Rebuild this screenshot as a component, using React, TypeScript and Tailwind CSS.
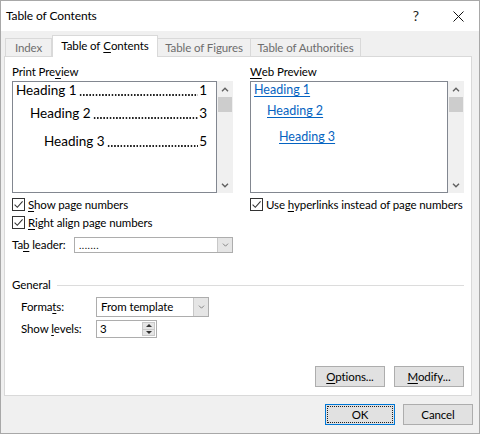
import type { ReactNode } from "react"

function CheckMark() {
  return (
    <svg viewBox="0 0 11 11" className="size-[11px]">
      <path d="M1.6 5.6 L4.3 8.3 L9.6 2.4" fill="none" stroke="#333" strokeWidth="1.1" />
    </svg>
  )
}

function Check({ children }: { children: ReactNode }) {
  return (
    <div className="flex h-[17px] items-center gap-[3px] whitespace-nowrap">
      <span className="flex size-[13px] shrink-0 items-center justify-center border border-[#333] bg-white">
        <CheckMark />
      </span>
      <span>{children}</span>
    </div>
  )
}

function Arrow({ up = false, color = "#606060" }: { up?: boolean; color?: string }) {
  return (
    <svg viewBox="0 0 8 5" className="h-[5px] w-[8px]">
      <path
        d={up ? "M1 4.2 L4 1.2 L7 4.2" : "M1 0.8 L4 3.8 L7 0.8"}
        fill="none"
        stroke={color}
        strokeWidth="1.4"
      />
    </svg>
  )
}

function ScrollBar() {
  return (
    <div className="flex w-[16px] flex-col bg-[#f0f0f0]">
      <div className="flex h-[16px] items-center justify-center">
        <Arrow up />
      </div>
      <div className="mx-px h-[15px] bg-[#cdcdcd]" />
      <div className="flex-1" />
      <div className="flex h-[16px] items-center justify-center">
        <Arrow />
      </div>
    </div>
  )
}

// dotted tab leader, drawn as a repeating dot instead of a long run of "." text
function Leader({ indent, title, page, className }: { indent: string; title: string; page: string; className: string }) {
  return (
    <div className={`flex h-[17px] items-center whitespace-nowrap ${indent} ${className}`}>
      <span>{title}</span>
      <span className="mb-[3px] ml-[2px] h-[2px] min-w-0 flex-1 self-end bg-[radial-gradient(circle,#222_0.75px,transparent_1px)] bg-[length:3.2px_2px] bg-repeat-x" />
      <span className="ml-px">{page}</span>
    </div>
  )
}

function DropButton({ className = "" }: { className?: string }) {
  return (
    <div className={`flex w-[15px] items-center justify-center border-l border-[#c8c8c8] bg-[#e5e5e5] ${className}`}>
      <svg viewBox="0 0 8 5" className="h-[4px] w-[7px]">
        <path d="M0.8 0.8 L4 4 L7.2 0.8" fill="none" stroke="#707070" strokeWidth="1" />
      </svg>
    </div>
  )
}

function Button({ children, primary = false, className = "" }: { children: ReactNode; primary?: boolean; className?: string }) {
  return (
    <div
      className={`flex h-[21px] w-[70px] items-center justify-center border bg-[#e1e1e1] ${
        primary ? "border-[#0078d7] p-px" : "border-[#adadad]"
      } ${className}`}
    >
      {primary ? (
        <div className="flex size-full items-center justify-center border border-dotted border-[#222]">{children}</div>
      ) : (
        children
      )}
    </div>
  )
}

export default function App() {
  return (
    <div className="flex h-[434px] w-[480px] flex-col border border-[#a8a8a8] bg-[#f0f0f0] font-[family-name:Lato,'Noto_Sans',sans-serif] text-[11.5px] leading-none tracking-[-0.1px] text-black">
      {/* title bar */}
      <div className="flex h-[30px] items-center bg-white pl-[5px]">
        <span className="text-[12px]">Table of Contents</span>
        <span className="ml-auto mr-[34px] text-[14px] text-[#222]">?</span>
        <svg viewBox="0 0 11 11" className="mr-[15px] size-[11px]">
          <path d="M0.5 0.5 L10.5 10.5 M10.5 0.5 L0.5 10.5" stroke="#111" strokeWidth="1" />
        </svg>
      </div>

      {/* tabs */}
      <div className="flex h-[25px] items-end pl-[4px]">
        <div className="flex h-[18px] w-[47px] items-center justify-center border border-b-0 border-[#d9d9d9] bg-[#f0f0f0] text-[#6d6d6d]">
          Index
        </div>
        <div className="relative z-10 -mb-px flex h-[22px] w-[106px] items-center justify-center border border-b-0 border-[#d9d9d9] bg-white pb-[2px]">
          Table of <span className="ml-[3px] underline underline-offset-2">C</span>ontents
        </div>
        <div className="flex h-[18px] w-[93px] items-center justify-center border border-b-0 border-l-0 border-[#d9d9d9] bg-[#f0f0f0] text-[#6d6d6d]">
          Table of Figures
        </div>
        <div className="flex h-[18px] w-[110px] items-center justify-center border border-b-0 border-l-0 border-[#d9d9d9] bg-[#f0f0f0] text-[#6d6d6d]">
          Table of Authorities
        </div>
      </div>

      {/* panel */}
      <div className="ml-[3px] flex h-[340px] w-[468px] flex-col border border-[#d9d9d9] bg-white pl-[7px] pr-[7px] pt-[7px]">
        <div className="flex h-[211px]">
          {/* left column */}
          <div className="flex w-[221px] flex-col">
            <div className="flex h-[16px] items-center">
              Print Pre<span className="underline underline-offset-2">v</span>iew
            </div>
            <div className="mt-px flex h-[112px]">
              <div className="w-[205px] border border-[#828790] bg-white pl-[3px] pr-[9px] text-[13.5px] tracking-normal">
                <Leader indent="" title="Heading 1" page="1" className="" />
                <Leader indent="pl-[14px]" title="Heading 2 " page="3" className="mt-[6px]" />
                <Leader indent="pl-[28px]" title="Heading 3" page="5" className="mt-[11px]" />
              </div>
              <ScrollBar />
            </div>
            <div className="mt-[3px]">
              <Check>
                <span className="underline underline-offset-2">S</span>how page numbers
              </Check>
            </div>
            <div className="mt-px">
              <Check>
                <span className="underline underline-offset-2">R</span>ight align page numbers
              </Check>
            </div>
            <div className="mt-[6px] flex h-[16px] items-center">
              <span className="w-[62px]">
                Ta<span className="underline underline-offset-2">b</span> leader:
              </span>
              <div className="flex h-[16px] flex-1 border border-[#adadad] bg-white">
                <span className="flex-1 pl-[4px] pt-[2px] text-[10px] tracking-[0.5px]">.......</span>
                <DropButton />
              </div>
            </div>
          </div>

          <div className="ml-[8px] w-px bg-[#b9b9b9]" />

          {/* right column */}
          <div className="ml-[9px] flex w-[214px] flex-col">
            <div className="flex h-[16px] items-center">
              <span className="underline underline-offset-2">W</span>eb Preview
            </div>
            <div className="mt-px flex h-[112px]">
              <div className="w-[198px] border border-[#828790] bg-white pl-[3px] text-[12.5px] tracking-normal text-[#0563c1]">
                <div className="flex h-[17px] items-center">
                  <span className="underline underline-offset-2">Heading 1</span>
                </div>
                <div className="mt-[4px] flex h-[17px] items-center pl-[13px]">
                  <span className="underline underline-offset-2">Heading 2</span>
                </div>
                <div className="mt-[9px] flex h-[17px] items-center pl-[25px]">
                  <span className="underline underline-offset-2">Heading 3</span>
                </div>
              </div>
              <ScrollBar />
            </div>
            <div className="mt-[3px]">
              <Check>
                Use <span className="underline underline-offset-2">h</span>yperlinks instead of page numbers
              </Check>
            </div>
          </div>
        </div>

        {/* general */}
        <div className="mt-[2px] flex h-[16px] items-center gap-[6px]">
          <span>General</span>
          <div className="h-px flex-1 bg-[#dcdcdc]" />
        </div>
        <div className="mt-[4px] flex h-[20px] items-center pl-[9px]">
          <span className="w-[75px]">
            Forma<span className="underline underline-offset-2">t</span>s:
          </span>
          <div className="flex h-[20px] w-[113px] border border-[#adadad] bg-white">
            <span className="flex flex-1 items-center pl-[4px]">From template</span>
            <DropButton />
          </div>
        </div>
        <div className="mt-[3px] flex h-[18px] items-center pl-[9px]">
          <span className="w-[75px]">
            Show <span className="underline underline-offset-2">l</span>evels:
          </span>
          <div className="flex h-[18px] w-[61px] border border-[#adadad] bg-white">
            <span className="flex flex-1 items-center pl-[3px]">3</span>
            <div className="m-px flex w-[13px] flex-col border border-[#c8c8c8] bg-[#e5e5e5]">
              <div className="flex flex-1 items-center justify-center border-b border-[#c8c8c8]">
                <svg viewBox="0 0 6 3" className="h-[3px] w-[6px]">
                  <path d="M0 3 L3 0 L6 3 Z" fill="#333" />
                </svg>
              </div>
              <div className="flex flex-1 items-center justify-center">
                <svg viewBox="0 0 6 3" className="h-[3px] w-[6px]">
                  <path d="M0 0 L3 3 L6 0 Z" fill="#333" />
                </svg>
              </div>
            </div>
          </div>
        </div>
        <div className="mb-[8px] mt-auto flex justify-end gap-[9px]">
          <Button className="h-[20px] w-[69px]">
            <span>
              <span className="underline underline-offset-2">O</span>ptions...
            </span>
          </Button>
          <Button className="h-[20px] w-[68px]">
            <span>
              <span className="underline underline-offset-2">M</span>odify...
            </span>
          </Button>
        </div>
      </div>

      {/* bottom buttons */}
      <div className="mt-[8px] flex justify-end gap-[8px] pr-[6px]">
        <Button primary>OK</Button>
        <Button>Cancel</Button>
      </div>
    </div>
  )
}
